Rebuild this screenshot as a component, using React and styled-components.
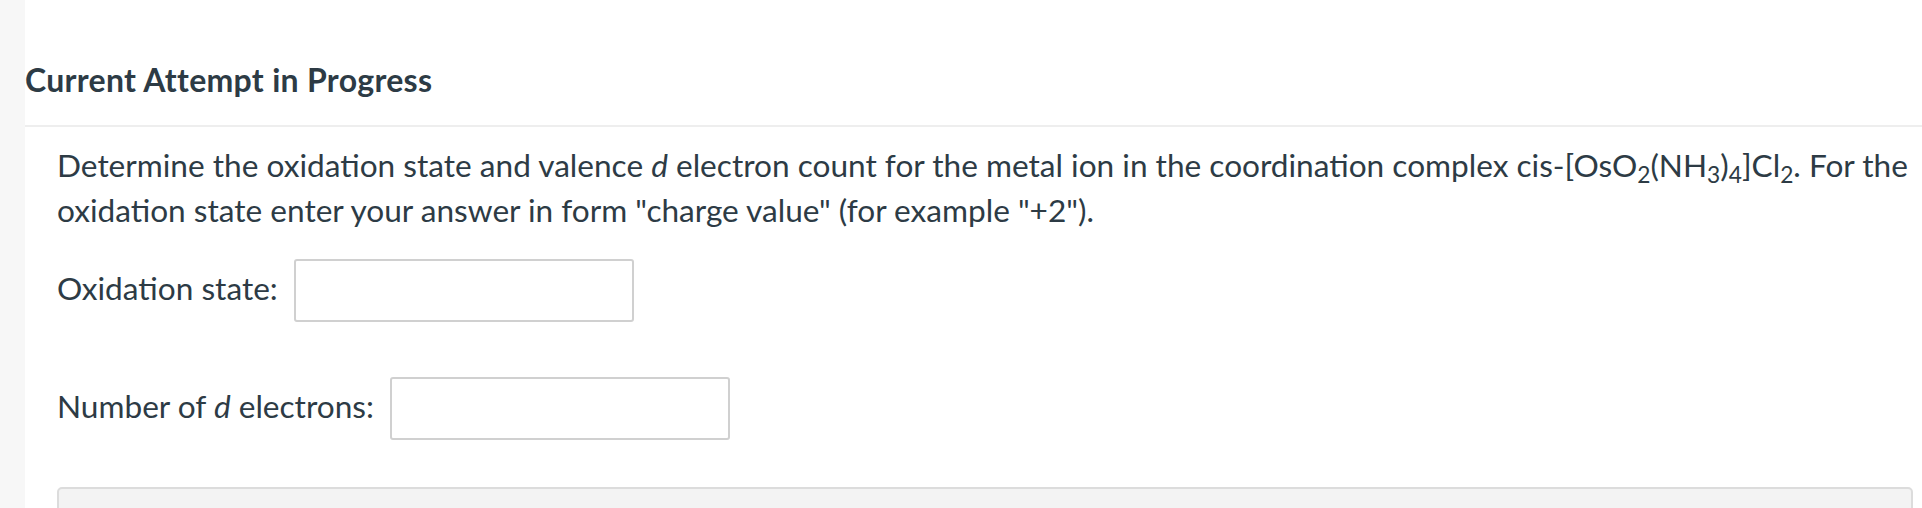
import React from 'react'
import styled, { createGlobalStyle } from 'styled-components'

const GlobalStyle = createGlobalStyle`
    html, body {
        margin: 0;
        padding: 0;
        background: #ffffff;
    }
    body {
        font-family: Lato, "Open Sans", "Liberation Sans", sans-serif;
        color: #2d3b45;
        overflow: hidden;
    }
`

export default function App() {
    return (
        <>
            <GlobalStyle />
            <Page>
                <Strip />
                <Main>
                    <Headline>Current Attempt in Progress</Headline>
                    <Divider />
                    <Question>
                        <Text>
                            Determine the oxidation state and valence <i>d</i> electron count for the metal ion in the
                            coordination complex cis-[OsO<Sub>2</Sub>(NH<Sub>3</Sub>)<Sub>4</Sub>]Cl<Sub>2</Sub>. For the
                            oxidation state enter your answer in form "charge value" (for example "+2").
                        </Text>
                        <Field first>
                            <Label>Oxidation state:</Label>
                            <Input type="text" />
                        </Field>
                        <Field>
                            <Label>Number of <i>d</i> electrons:</Label>
                            <Input type="text" />
                        </Field>
                        <Panel />
                    </Question>
                </Main>
            </Page>
        </>
    )
}

const Page = styled.div`
    display: grid;
    grid-template-columns: 25px 1fr;
    height: 508px;
    overflow: hidden;
`

const Strip = styled.div`
    background: #f7f7f7;
`

const Main = styled.div`
    display: flex;
    flex-direction: column;
    padding-top: 62px;
`

const Headline = styled.h1`
    margin: 0;
    font-size: 32px;
    line-height: 36px;
    font-weight: 700;
    letter-spacing: 0.3px;
    color: #2d3b45;
`

const Divider = styled.div`
    margin-top: 27px;
    height: 2px;
    background: #eeeeee;
`

const Question = styled.div`
    display: flex;
    flex-direction: column;
    padding: 16px 9px 0 32px;
`

const Text = styled.p`
    margin: 0;
    font-size: 31.6px;
    line-height: 45px;
    font-weight: 400;
`

const Sub = styled.sub`
    font-size: 0.72em;
    line-height: 0;
    vertical-align: -0.28em;
`

const Field = styled.div`
    display: flex;
    align-items: center;
    gap: 16px;
    margin-top: ${props => props.first ? '26px' : '55px'};
`

const Label = styled.span`
    font-size: 31.6px;
    line-height: 36px;
    padding-bottom: 6px;
`

const Input = styled.input`
    box-sizing: border-box;
    width: 340px;
    height: 63px;
    border: 2px solid #d0d0d0;
    border-radius: 3px;
    background: #ffffff;
    font: inherit;
    font-size: 28px;
    padding: 0 10px;
    outline: none;
`

const Panel = styled.div`
    margin-top: 47px;
    height: 90px;
    background: #f3f3f3;
    border: 2px solid #dcdcdc;
    border-radius: 5px;
`
